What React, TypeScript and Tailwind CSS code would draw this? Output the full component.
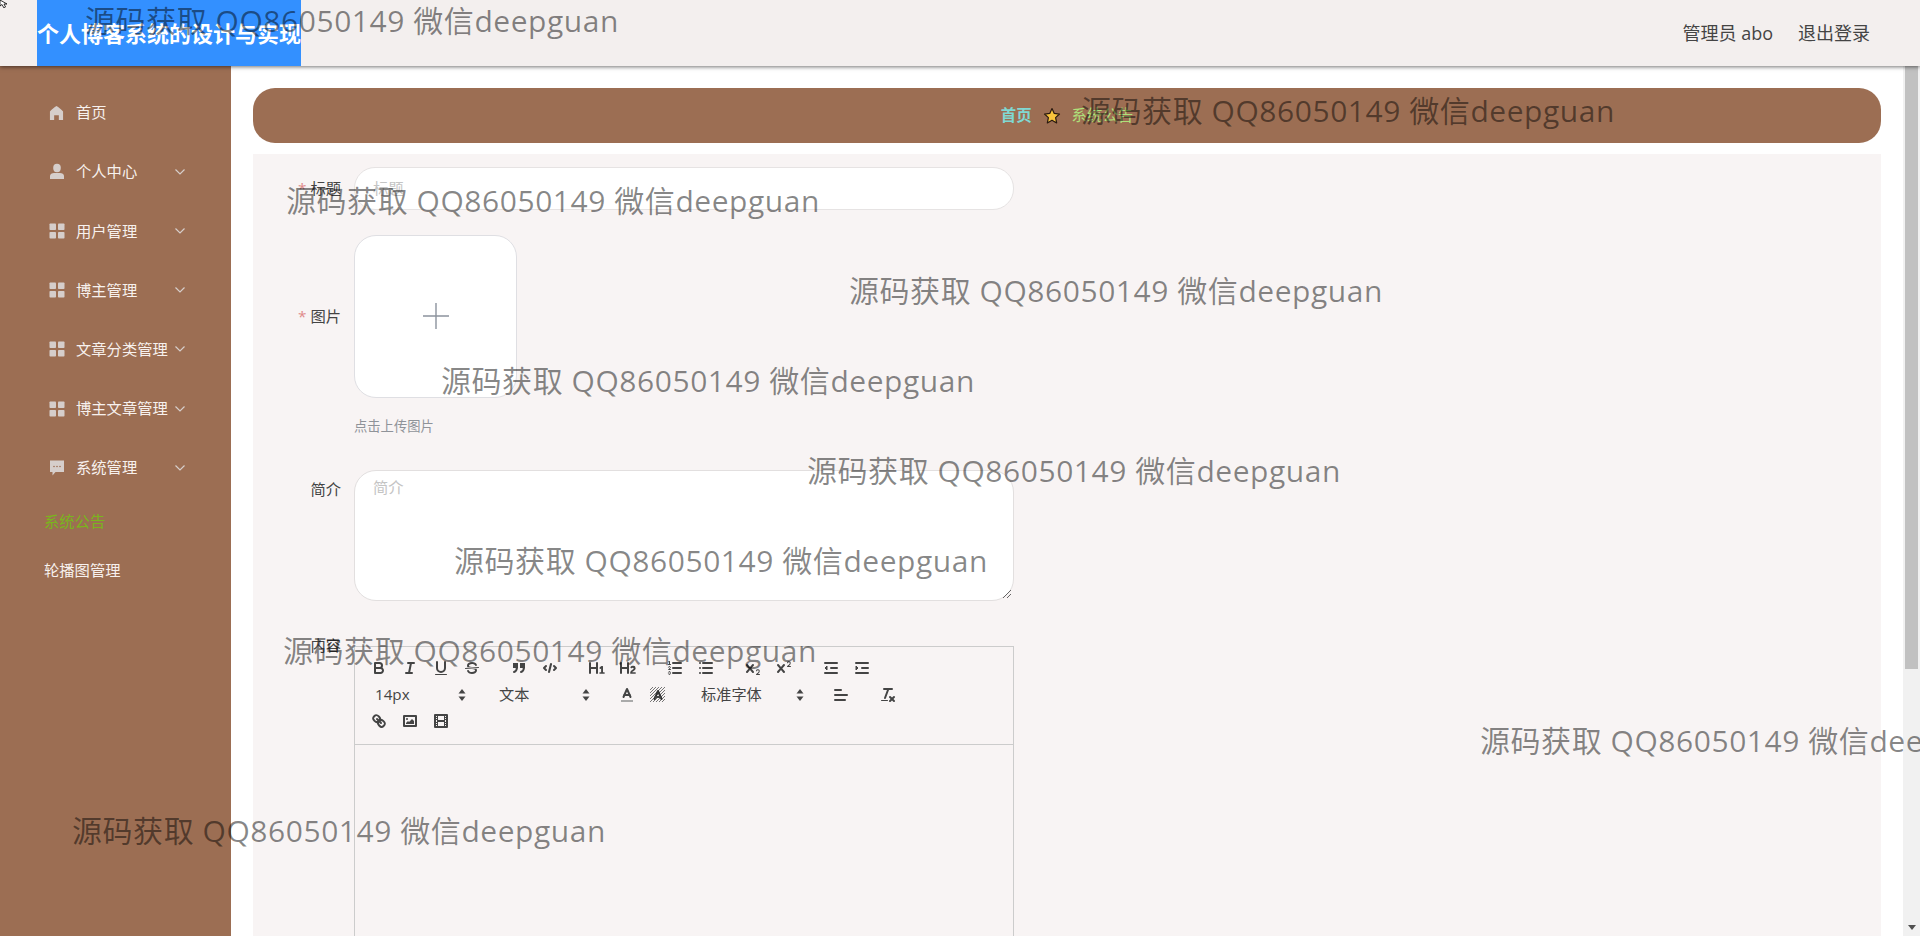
import React from "react";

const font = "font-['Open_Sans','Noto_Sans_CJK_SC',sans-serif]";
const S = { fill: "none", stroke: "#444", strokeWidth: 2, strokeLinecap: "round" as const, strokeLinejoin: "round" as const };
const T = { fill: "none", stroke: "#444", strokeWidth: 1, strokeLinecap: "round" as const, strokeLinejoin: "round" as const };
const F = { fill: "#444" };

const icons: Record<string, React.ReactNode> = {
  bold: <><path {...S} d="M5,4H9.5A2.5,2.5,0,0,1,12,6.5v0A2.5,2.5,0,0,1,9.5,9H5V4Z" /><path {...S} d="M5,9h5.5A2.5,2.5,0,0,1,13,11.5v0A2.5,2.5,0,0,1,10.5,14H5V9Z" /></>,
  italic: <><line {...S} x1="7" x2="13" y1="4" y2="4" /><line {...S} x1="5" x2="11" y1="14" y2="14" /><line {...S} x1="8" x2="10" y1="14" y2="4" /></>,
  underline: <><path {...S} d="M5,3V9a4.012,4.012,0,0,0,4,4H9a4.012,4.012,0,0,0,4-4V3" /><rect {...F} x="3" y="15" width="12" height="1" rx=".5" /></>,
  strike: <><line {...T} x1="15.5" x2="2.5" y1="8.5" y2="9.5" /><path {...F} d="M9.007,8C6.542,7.791,6,7.519,6,6.5,6,5.792,7.283,5,9,5c1.571,0,2.765.679,2.969,1.309a1,1,0,0,0,1.9-.617C13.356,4.106,11.354,3,9,3,6.2,3,4,4.538,4,6.5a3.2,3.2,0,0,0,.5,1.843Z" /><path {...F} d="M8.984,10C11.457,10.208,12,10.479,12,11.5c0,.708-1.283,1.5-3,1.5-1.571,0-2.765-.679-2.969-1.309a1,1,0,1,0-1.9.617C4.644,13.894,6.646,15,9,15c2.8,0,5-1.538,5-3.5a3.2,3.2,0,0,0-.5-1.843Z" /></>,
  quote: <><rect fill="#444" stroke="#444" strokeWidth="2" height="3" width="3" x="4" y="5" /><rect fill="#444" stroke="#444" strokeWidth="2" height="3" width="3" x="11" y="5" /><path {...S} d="M7,8c0,4.031-3,5-3,5" /><path {...S} d="M14,8c0,4.031-3,5-3,5" /></>,
  code: <><polyline {...S} points="5 7 3 9 5 11" /><polyline {...S} points="13 7 15 9 13 11" /><line {...S} x1="10" x2="8" y1="5" y2="13" /></>,
  h1: <path {...F} d="M10,4V14a1,1,0,0,1-2,0V10H3v4a1,1,0,0,1-2,0V4A1,1,0,0,1,3,4V8H8V4a1,1,0,0,1,2,0Zm6.06787,9.209H14.98975V7.59863a.54085.54085,0,0,0-.605-.60547h-.62744a1.01119,1.01119,0,0,0-.748.29688L11.645,8.56641a.5435.5435,0,0,0-.022.8584l.28613.30762a.53861.53861,0,0,0,.84717.0332l.09912-.08789a1.2137,1.2137,0,0,0,.2417-.35254h.02246s-.01123.30859-.01123.60547V13.209H12.041a.54085.54085,0,0,0-.605.60547v.43945a.54085.54085,0,0,0,.605.60547h4.02686a.54085.54085,0,0,0,.605-.60547v-.43945A.54085.54085,0,0,0,16.06787,13.209Z" />,
  h2: <path {...F} d="M16.73975,13.81445v.43945a.54085.54085,0,0,1-.605.60547H11.855a.58392.58392,0,0,1-.64893-.60547V14.0127c0-2.90527,3.39941-3.42187,3.39941-4.55469a.77675.77675,0,0,0-.84717-.78125,1.17684,1.17684,0,0,0-.83594.38477c-.2749.26367-.561.374-.85791.13184l-.4292-.34082c-.30811-.24219-.38525-.51758-.1543-.81445a2.97155,2.97155,0,0,1,2.45361-1.17676,2.45393,2.45393,0,0,1,2.68408,2.40918c0,2.45312-3.1792,2.92676-3.27832,3.93848h2.79443A.54085.54085,0,0,1,16.73975,13.81445ZM9,3A.99974.99974,0,0,0,8,4V8H3V4A1,1,0,0,0,1,4V14a1,1,0,0,0,2,0V10H8v4a1,1,0,0,0,2,0V4A.99974.99974,0,0,0,9,3Z" />,
  ol: <><line {...S} x1="7" x2="15" y1="4" y2="4" /><line {...S} x1="7" x2="15" y1="9" y2="9" /><line {...S} x1="7" x2="15" y1="14" y2="14" /><line {...T} x1="2.5" x2="4.5" y1="5.5" y2="5.5" /><path {...F} d="M3.5,6A0.5,0.5,0,0,1,3,5.5V3.085l-0.276.138A0.5,0.5,0,0,1,2.053,3c-0.124-.247-0.023-0.324.224-0.447l1-.5A0.5,0.5,0,0,1,4,2.5v3A0.5,0.5,0,0,1,3.5,6Z" /><path {...T} d="M4.5,10.5h-2c0-.234,1.85-1.076,1.85-2.234A0.959,0.959,0,0,0,2.5,8.156" /><path {...T} d="M2.5,14.846a0.959,0.959,0,0,0,1.85-.109A0.7,0.7,0,0,0,3.75,14a0.688,0.688,0,0,0,.6-0.736,0.959,0.959,0,0,0-1.85-.109" /></>,
  ul: <><line {...S} x1="6" x2="15" y1="4" y2="4" /><line {...S} x1="6" x2="15" y1="9" y2="9" /><line {...S} x1="6" x2="15" y1="14" y2="14" /><line {...S} x1="3" x2="3" y1="4" y2="4" /><line {...S} x1="3" x2="3" y1="9" y2="9" /><line {...S} x1="3" x2="3" y1="14" y2="14" /></>,
  sub: <><path {...F} d="M15.5,15H13.861a3.858,3.858,0,0,0,1.914-2.975,1.8,1.8,0,0,0-1.6-1.751A1.921,1.921,0,0,0,12.021,11.7a0.50013,0.50013,0,1,0,.957.291h0a0.914,0.914,0,0,1,1.053-.725,0.81,0.81,0,0,1,.744.762c0,1.076-1.16971,1.86982-1.93971,2.43082A1.45639,1.45639,0,0,0,12,15.5a0.5,0.5,0,0,0,.5.5h3A0.5,0.5,0,0,0,15.5,15Z" /><path {...F} d="M9.65,5.241a1,1,0,0,0-1.409.108L6,7.964,3.759,5.349A1,1,0,0,0,2.192,6.59178Q2.21541,6.6213,2.241,6.649L4.684,9.5,2.241,12.35A1,1,0,0,0,3.71,13.70722q0.02557-.02768.049-0.05722L6,11.036,8.241,13.65a1,1,0,1,0,1.567-1.24277Q9.78459,12.3777,9.759,12.35L7.316,9.5,9.759,6.651A1,1,0,0,0,9.65,5.241Z" /></>,
  sup: <><path {...F} d="M15.5,7H13.861a4.015,4.015,0,0,0,1.914-2.975,1.8,1.8,0,0,0-1.6-1.751A1.922,1.922,0,0,0,12.021,3.7a0.5,0.5,0,1,0,.957.291,0.917,0.917,0,0,1,1.053-.725,0.81,0.81,0,0,1,.744.762c0,1.077-1.164,1.925-1.934,2.486A1.423,1.423,0,0,0,12,7.5a0.5,0.5,0,0,0,.5.5h3A0.5,0.5,0,0,0,15.5,7Z" /><path {...F} d="M9.651,5.241a1,1,0,0,0-1.41.108L6,7.964,3.759,5.349a1,1,0,1,0-1.519,1.3L4.683,9.5,2.241,12.35a1,1,0,1,0,1.519,1.3L6,11.036,8.241,13.65a1,1,0,0,0,1.519-1.3L7.317,9.5,9.759,6.651A1,1,0,0,0,9.651,5.241Z" /></>,
  outdent: <><line {...S} x1="3" x2="15" y1="14" y2="14" /><line {...S} x1="3" x2="15" y1="4" y2="4" /><line {...S} x1="9" x2="15" y1="9" y2="9" /><polyline fill="#444" stroke="#444" strokeWidth="1" points="5 7 5 11 3 9 5 7" /></>,
  indent: <><line {...S} x1="3" x2="15" y1="14" y2="14" /><line {...S} x1="3" x2="15" y1="4" y2="4" /><line {...S} x1="9" x2="15" y1="9" y2="9" /><polyline fill="#444" stroke="#444" strokeWidth="1" points="3 7 3 11 5 9 3 7" /></>,
  color: <><line fill="none" stroke="#aaa" strokeWidth="2" x1="3" x2="15" y1="15" y2="15" /><polyline {...S} points="5.5 11 9 3 12.5 11" /><line {...S} x1="11.63" x2="6.38" y1="9" y2="9" /></>,
  background: <><g stroke="#555" strokeWidth="0.8">{[0, 3, 6, 9, 12, 15, 18, 21, 24, 27, 30].map((i) => (<line key={i} x1={Math.max(1, i - 15 + 1)} y1={Math.min(16, i + 1)} x2={Math.min(16, i + 1)} y2={Math.max(1, i - 15 + 1)} />))}</g><polyline {...S} stroke="#333" points="5.5 13 9 5 12.5 13" /><line {...S} x1="11.63" x2="6.38" y1="11" y2="11" /></>,
  align: <><line {...S} x1="3" x2="15" y1="9" y2="9" /><line {...S} x1="3" x2="13" y1="14" y2="14" /><line {...S} x1="3" x2="9" y1="4" y2="4" /></>,
  clean: <><line {...S} x1="5" x2="13" y1="3" y2="3" /><line {...S} x1="6" x2="9.35" y1="12" y2="3" /><line {...S} x1="11" x2="15" y1="11" y2="15" /><line {...S} x1="15" x2="11" y1="11" y2="15" /><rect {...F} height="1" rx=".5" ry=".5" width="7" x="2" y="14" /></>,
  link: <><line {...S} x1="7" x2="11" y1="7" y2="11" /><path {...S} d="M8.9,4.577a3.476,3.476,0,0,1,.36,4.679A3.476,3.476,0,0,1,4.577,8.9C3.185,7.5,2.035,6.4,4.217,4.217S7.5,3.185,8.9,4.577Z" /><path {...S} d="M13.423,9.1a3.476,3.476,0,0,0-4.679-.36,3.476,3.476,0,0,0,.36,4.679c1.392,1.392,2.5,2.542,4.679.36S14.815,10.5,13.423,9.1Z" /></>,
  image: <><rect {...S} height="10" width="12" x="3" y="4" /><circle {...F} cx="6" cy="7" r="1" /><polyline {...F} points="5 12 5 11 7 9 8 10 11 7 13 9 13 12 5 12" /></>,
  video: <><rect {...S} height="12" width="12" x="3" y="3" /><rect {...F} height="12" width="1" x="5" y="3" /><rect {...F} height="12" width="1" x="12" y="3" /><rect {...F} height="2" width="8" x="5" y="8" /><rect {...F} height="1" width="3" x="3" y="5" /><rect {...F} height="1" width="3" x="3" y="7" /><rect {...F} height="1" width="3" x="3" y="10" /><rect {...F} height="1" width="3" x="3" y="12" /><rect {...F} height="1" width="3" x="12" y="5" /><rect {...F} height="1" width="3" x="12" y="7" /><rect {...F} height="1" width="3" x="12" y="10" /><rect {...F} height="1" width="3" x="12" y="12" /></>,
};

function Btn({ name }: { name: string }) {
  return (
    <span className="flex h-[24px] w-[31px] items-center justify-center">
      <svg viewBox="0 0 18 18" className="h-[18px] w-[18px]">{icons[name]}</svg>
    </span>
  );
}

function Group({ names }: { names: string[] }) {
  return (
    <span className="mr-[16px] flex">
      {names.map((n) => (<Btn key={n} name={n} />))}
    </span>
  );
}

function Picker({ label, width }: { label: string; width: string }) {
  return (
    <span className={`mr-[15px] flex h-[24px] items-center justify-between pl-[12px] pr-[6px] text-[15.2px] text-[#444] ${width}`}>
      <span>{label}</span>
      <svg viewBox="0 0 8 14" className="h-[14px] w-[8px]">
        <polygon points="4,1 7.5,5.5 0.5,5.5" fill="#444" />
        <polygon points="4,13 7.5,8.5 0.5,8.5" fill="#444" />
      </svg>
    </span>
  );
}

function Home() {
  return <svg viewBox="0 0 16 16" className="h-[16px] w-[15px]"><path fill="#d6cecb" d="M8 .5C10 1.5 13.5 4.5 15 6.5V15.5H10.5V10.5H5.5V15.5H1V6.5C2.5 4.5 6 1.5 8 .5Z" /></svg>;
}
function User() {
  return <svg viewBox="0 0 16 16" className="h-[17px] w-[16px]"><ellipse cx="8" cy="4.5" rx="3.8" ry="4.2" fill="#d6cecb" /><path fill="#d6cecb" d="M1 15.5V12.5C1 10.5 3 9.5 5 9.5H11C13 9.5 15 10.5 15 12.5V15.5Z" /></svg>;
}
function GridI() {
  return <svg viewBox="0 0 16 16" className="h-[16px] w-[16px]"><rect x="0.5" y="0.5" width="6.5" height="6.5" rx="0.8" fill="#d6cecb" /><rect x="9" y="0.5" width="6.5" height="6.5" rx="0.8" fill="#d6cecb" /><rect x="0.5" y="9" width="6.5" height="6.5" rx="0.8" fill="#d6cecb" /><rect x="9" y="9" width="6.5" height="6.5" rx="0.8" fill="#d6cecb" /></svg>;
}
function Chat() {
  return <svg viewBox="0 0 16 16" className="h-[18px] w-[16px]"><path fill="#d6cecb" d="M1 0.5H15V12H6.5L3.5 15.5V12H1Z" /><circle cx="5" cy="6.5" r="0.8" fill="#9c6e53" /><circle cx="8" cy="6.5" r="0.8" fill="#9c6e53" /><circle cx="11" cy="6.5" r="0.8" fill="#9c6e53" /></svg>;
}

const menu: { label: string; icon: React.ReactNode; arrow: boolean }[] = [
  { label: "首页", icon: <Home />, arrow: false },
  { label: "个人中心", icon: <User />, arrow: true },
  { label: "用户管理", icon: <GridI />, arrow: true },
  { label: "博主管理", icon: <GridI />, arrow: true },
  { label: "文章分类管理", icon: <GridI />, arrow: true },
  { label: "博主文章管理", icon: <GridI />, arrow: true },
  { label: "系统管理", icon: <Chat />, arrow: true },
];

const marks = [
  "left-[85px] top-[1px]",
  "left-[1081px] top-[91px]",
  "left-[286px] top-[181px]",
  "left-[849px] top-[271px]",
  "left-[441px] top-[361px]",
  "left-[807px] top-[451px]",
  "left-[454px] top-[541px]",
  "left-[283px] top-[631px]",
  "left-[1480px] top-[721px]",
  "left-[72px] top-[811px]",
];

export default function App() {
  return (
    <div className={`relative flex h-[936px] w-[1920px] flex-col overflow-hidden bg-white ${font}`}>
      <header className="z-10 flex h-[66px] shrink-0 items-center justify-between bg-[#f3efee] pl-[37px] pr-[50px] shadow-[0_1px_4px_rgba(0,0,0,0.55)]">
        <div className="flex h-full w-[264px] items-center whitespace-nowrap bg-[#3390ff] text-[22px] font-bold text-white">个人博客系统的设计与实现</div>
        <div className="flex items-center gap-[25px] text-[18px] text-[#444]">
          <span>管理员 abo</span>
          <span>退出登录</span>
        </div>
      </header>

      <div className="flex min-h-0 flex-1">
        <aside className="w-[231px] shrink-0 bg-[#9c6e53] pt-[17px]">
          {menu.map((m) => (
            <div key={m.label} className="flex h-[59.2px] items-center pl-[49px] text-[15.3px] text-[#f7f1ee]">
              <span className="flex w-[27px] items-center">{m.icon}</span>
              <span className="w-[98px] whitespace-nowrap">{m.label}</span>
              {m.arrow && (
                <svg viewBox="0 0 12 12" className="h-[12px] w-[12px]"><polyline points="1.5,3.5 6,8 10.5,3.5" fill="none" stroke="#d6cecb" strokeWidth="1.2" /></svg>
              )}
            </div>
          ))}
          <div className="flex h-[48px] items-center pl-[44px] text-[15.3px] text-[#7ab51d]">系统公告</div>
          <div className="flex h-[50px] items-center pl-[44px] text-[15.3px] text-[#f7f1ee]">轮播图管理</div>
        </aside>

        <main className="min-w-0 flex-1 px-[22px] pt-[22px]">
          <div className="flex h-[55px] items-center justify-center gap-[11px] rounded-[22px] bg-[#9c6e53] text-[15.4px]">
            <span className="font-bold text-[#80d8d2]">首页</span>
            <svg viewBox="0 0 24 24" className="h-[18px] w-[18px]"><path d="M12 2l3 6.6 7 .8-5.2 4.8 1.4 7.1L12 17.7 5.8 21.3l1.4-7.1L2 9.4l7-.8z" fill="#f8c33c" stroke="#2a1a10" strokeWidth="1.6" strokeLinejoin="round" /></svg>
            <span className="text-[#aee07a]">系统公告</span>
          </div>

          <div className="mt-[11px] h-[800px] bg-[#f8f4f4] pt-[13px] text-[15.3px] text-[#444]">
            <div className="flex items-center">
              <label className="w-[88px] text-right"><span className="mr-[4px] text-[#e08a8a]">*</span>标题</label>
              <div className="ml-[13px] flex h-[43px] w-[660px] items-center rounded-[21px] border border-[#e6e3e3] bg-white pl-[18px] text-[#c4c4c4]">标题</div>
            </div>

            <div className="mt-[25px] flex items-center">
              <label className="w-[88px] text-right"><span className="mr-[4px] text-[#e08a8a]">*</span>图片</label>
              <div className="ml-[13px] flex h-[163px] w-[163px] items-center justify-center rounded-[22px] border border-[#dfdfe3] bg-white pb-[2px]">
                <svg viewBox="0 0 26 26" className="h-[26px] w-[26px]"><path d="M13 0V26M0 13H26" stroke="#8c939d" strokeWidth="1.4" /></svg>
              </div>
            </div>
            <div className="ml-[101px] mt-[19px] text-[13.3px] leading-[18px] text-[#8f9399]">点击上传图片</div>

            <div className="mt-[35px] flex items-start">
              <label className="w-[88px] pt-[8px] text-right">简介</label>
              <div className="relative ml-[13px] h-[131px] w-[660px] rounded-[22px] border border-[#e2dfdf] bg-white pl-[18px] pt-[5px] text-[#c4c4c4]">
                简介
                <svg viewBox="0 0 10 10" className="absolute bottom-[1px] right-[1px] h-[10px] w-[10px]"><path d="M1 9 9 1M5 9 9 5" stroke="#666" strokeWidth="1" /></svg>
              </div>
            </div>

            <div className="mt-[45px] flex items-start">
              <label className="-mt-[12px] w-[88px] text-right">内容</label>
              <div className="ml-[13px] w-[660px] border border-[#ccc]">
                <div className="h-[98px] border-b border-[#ccc] pl-[8px] pt-[8px]">
                  <div className="flex h-[26.5px] items-center">
                    <Group names={["bold", "italic", "underline", "strike"]} />
                    <Group names={["quote", "code"]} />
                    <Group names={["h1", "h2"]} />
                    <Group names={["ol", "ul"]} />
                    <Group names={["sub", "sup"]} />
                    <Group names={["outdent", "indent"]} />
                  </div>
                  <div className="flex h-[26.5px] items-center">
                    <Picker label="14px" width="w-[109px]" />
                    <Picker label="文本" width="w-[109px]" />
                    <Group names={["color", "background"]} />
                    <Picker label="标准字体" width="w-[121px]" />
                    <Group names={["align"]} />
                    <Group names={["clean"]} />
                  </div>
                  <div className="flex h-[26.5px] items-center">
                    <Group names={["link", "image", "video"]} />
                  </div>
                </div>
                <div className="h-[300px]" />
              </div>
            </div>
          </div>
        </main>

        <div className="flex w-[17px] shrink-0 flex-col bg-[#f1f1f1]">
          <div className="mx-[2px] h-[603px] bg-[#c1c1c1]" />
          <div className="flex-1" />
          <div className="flex h-[17px] items-center justify-center">
            <svg viewBox="0 0 8 5" className="h-[5px] w-[8px]"><polygon points="0,0 8,0 4,5" fill="#505050" /></svg>
          </div>
        </div>
      </div>

      {marks.map((c) => (
        <div key={c} className={`pointer-events-none absolute z-20 whitespace-nowrap font-['Open_Sans','Noto_Sans_CJK_SC',sans-serif] text-[30px] font-normal leading-[40px] tracking-[0.55px] text-[rgba(0,0,0,0.47)] ${c}`}>
          源码获取 QQ86050149 微信deepguan
        </div>
      ))}

      <svg viewBox="0 0 10 8" className="pointer-events-none absolute left-0 top-0 z-30 h-[8px] w-[10px]">
        <path d="M0 0V6L2 4.5 4 8 5.5 7 4 4H7Z" fill="#fff" stroke="#000" strokeWidth="0.8" />
      </svg>
    </div>
  );
}
